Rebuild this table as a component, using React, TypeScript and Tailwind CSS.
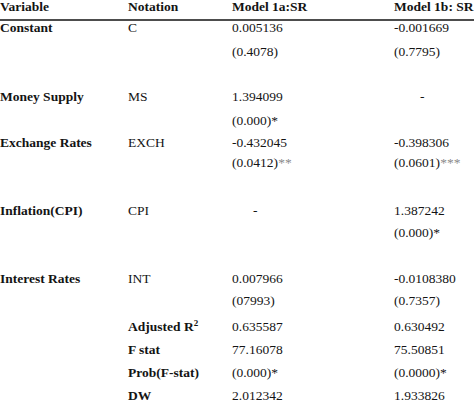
import React from "react";

type Row = {
  variable?: string;
  notation?: React.ReactNode;
  notationBold?: boolean;
  a: React.ReactNode[];
  b: React.ReactNode[];
  mt: string;
  gap: string;
};

const Stars = ({ n }: { n: string }) => <span className="text-[#8a8a8a]">{n}</span>;

const Dash = ({ pl }: { pl: string }) => <span className={pl}>-</span>;

const rows: Row[] = [
  { variable: "Constant", notation: "C", a: ["0.005136", "(0.4078)"], b: ["-0.001669", "(0.7795)"], mt: "mt-0", gap: "gap-[10px]" },
  {
    variable: "Money Supply",
    notation: "MS",
    a: ["1.394099", "(0.000)*"],
    b: [<Dash key="d" pl="pl-[26px]" />],
    mt: "mt-[31px]",
    gap: "gap-[10px]",
  },
  {
    variable: "Exchange Rates",
    notation: "EXCH",
    a: ["-0.432045", <>(0.0412)<Stars n="**" /></>],
    b: ["-0.398306", <>(0.0601)<Stars n="***" /></>],
    mt: "mt-[8px]",
    gap: "gap-[6px]",
  },
  {
    variable: "Inflation(CPI)",
    notation: "CPI",
    a: [<Dash key="d" pl="pl-[21px]" />],
    b: ["1.387242", "(0.000)*"],
    mt: "mt-[34px]",
    gap: "gap-[8px]",
  },
  {
    variable: "Interest Rates",
    notation: "INT",
    a: ["0.007966", "(07993)"],
    b: ["-0.0108380", "(0.7357)"],
    mt: "mt-[32px]",
    gap: "gap-[8px]",
  },
  {
    notation: (
      <>
        Adjusted R<sup className="text-[9px] relative -top-[5px]">2</sup>
      </>
    ),
    notationBold: true,
    a: ["0.635587"],
    b: ["0.630492"],
    mt: "mt-[12px]",
    gap: "gap-0",
  },
  { notation: "F stat", notationBold: true, a: ["77.16078"], b: ["75.50851"], mt: "mt-[9px]", gap: "gap-0" },
  { notation: "Prob(F-stat)", notationBold: true, a: ["(0.000)*"], b: ["(0.0000)*"], mt: "mt-[9px]", gap: "gap-0" },
  { notation: "DW", notationBold: true, a: ["2.012342"], b: ["1.933826"], mt: "mt-[9px]", gap: "gap-0" },
];

const Cell = ({ lines, gap }: { lines: React.ReactNode[]; gap: string }) => (
  <div className={`flex flex-col ${gap}`}>
    {lines.map((l, i) => (
      <div key={i} className="h-[14px] leading-[14px] whitespace-nowrap">
        {l}
      </div>
    ))}
  </div>
);

export default function App() {
  return (
    <div className="w-[474px] h-[403px] overflow-hidden bg-white text-[#141414] text-[13.5px] font-['Liberation_Serif','Times_New_Roman',serif]">
      <div className="grid grid-cols-[128px_104px_162px_1fr] h-[19px] font-bold leading-[13px] whitespace-nowrap">
        <div>Variable</div>
        <div>Notation</div>
        <div>Model 1a:SR</div>
        <div>Model 1b: SR</div>
      </div>
      <div className="h-[2px] bg-[#4d4d4d]" />
      {rows.map((r, i) => (
        <div key={i} className={`grid grid-cols-[128px_104px_162px_1fr] ${r.mt}`}>
          <div className="h-[14px] leading-[14px] font-bold whitespace-nowrap">{r.variable}</div>
          <div className={`h-[14px] leading-[14px] whitespace-nowrap ${r.notationBold ? "font-bold" : ""}`}>
            {r.notation}
          </div>
          <Cell lines={r.a} gap={r.gap} />
          <Cell lines={r.b} gap={r.gap} />
        </div>
      ))}
    </div>
  );
}
